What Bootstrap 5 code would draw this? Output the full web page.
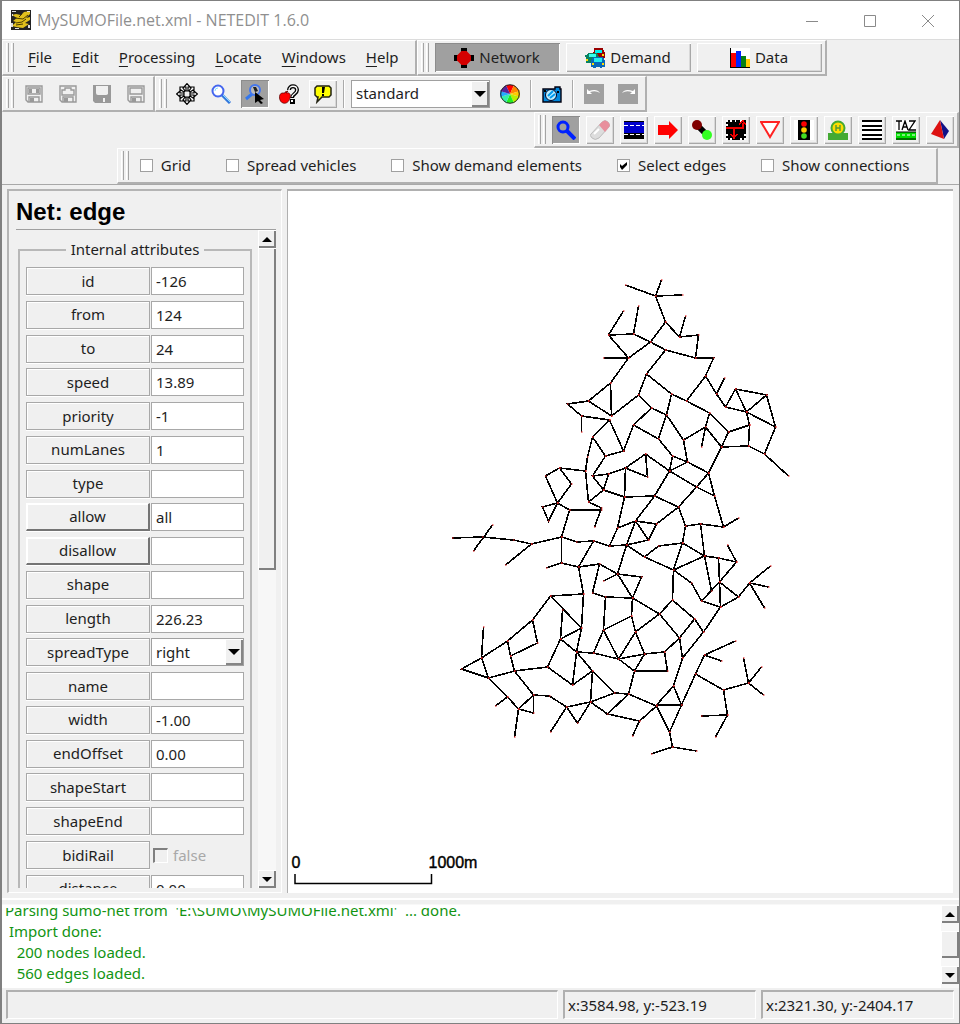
<!DOCTYPE html>
<html lang="en">
<head>
<meta charset="utf-8">
<meta name="viewport" content="width=device-width, initial-scale=1">
<title>MySUMOFile.net.xml - NETEDIT 1.6.0</title>
<link href="https://cdn.jsdelivr.net/npm/bootstrap@5.3.0/dist/css/bootstrap.min.css" rel="stylesheet">
<style>
:root { --face:#f0f0f0; --shade:#a0a0a0; --deep:#696969; }
body { font-family:"Noto Sans","Open Sans",sans-serif; font-size:15px; line-height:21px; color:#1e1e1e; background:var(--face); }
.app-window { border:1px solid #808080; border-left-width:2px; overflow:hidden; }
.titlebar { height:39px; background:#fff; color:#8f8f8f; font-family:"Open Sans",sans-serif; font-size:16px; border-bottom:1px solid #dcdcdc; padding-right:2px; }
.titlebar .win-btn { width:58px; height:38px; border:0; background:none; padding:0; color:#8a8a8a; }
.title-ico { margin:0 6px 0 9px; }
.tool-row { height:36px; }
.options-row { padding-left:12%; }
.tool-panel { height:36px; padding:0 3px; border:solid; border-width:1px 2px 2px 1px; border-color:#fff #b0b0b0 #b0b0b0 #fff; }
.tool-group { gap:6px; padding-left:2px; }
.grip { width:8px; height:29px; margin-right:4px; flex:none; background:linear-gradient(90deg,#fff 1px,var(--face) 1px,var(--face) 2px,#a4a4a4 2px,#a4a4a4 3px,var(--face) 3px,var(--face) 5px,#fff 5px,#fff 6px,var(--face) 6px,var(--face) 7px,#a4a4a4 7px); }
.menu-panel { padding-right:6px; }
.menu-link { padding:0 10px; color:#1e1e1e; text-decoration:none; }
.menu-link u { text-underline-offset:3px; }
.flat-btn, .raised-btn, .mode-btn { border:0; padding:0; background:var(--face); color:inherit; display:flex; align-items:center; justify-content:center; flex:none; }
.flat-btn, .raised-btn { width:28px; height:28px; }
.raised-btn, .mode-btn { box-shadow:inset 1px 1px #fff, inset -1px -1px #a8a8a8, inset -2px -2px #d8d8d8; }
.mode-btn { width:125px; height:29px; gap:5px; }
.is-on { background:#a0a0a0; box-shadow:inset 1px 1px #8c8c8c, inset -1px -1px #fff; }
.vsep { width:2px; height:28px; background:#aaa; border-right:1px solid #fff; }
.ico { width:20px; height:20px; flex:none; display:block; }
.combo { position:relative; background:#fff; border:1px solid var(--shade); }
.combo-view { width:139px; height:28px; }
.combo-attr { width:93px; }
.combo select { appearance:none; border:0; background:transparent; width:100%; height:100%; padding:0 4px; color:inherit; outline:0; }
.combo .drop { position:absolute; right:0; top:0; bottom:0; width:18px; pointer-events:none; background:var(--face); box-shadow:inset 1px 1px #fff, inset -2px -2px #858585; display:flex; align-items:center; justify-content:center; }
.option-list { gap:35px; padding-right:24px; padding-left:7px; }
.check-opt { gap:8px; }
.check-opt input { appearance:none; width:13px; height:13px; margin:0; background:#fff; border:1px solid #a0a0a0; }
.check-opt input:checked { background:#fff url("data:image/svg+xml,%3Csvg xmlns='http://www.w3.org/2000/svg' viewBox='0 0 11 11'%3E%3Cpath d='M2 4v3l2 3 5-5V2L4 6z'/%3E%3C/svg%3E"); }
.workspace { border-top:1px solid #a8a8a8; padding:4px 6px 5px 5px; gap:5px; }
.side { width:275px; border:solid; border-width:2px 1px 1px 2px; border-color:#b4b4b4 #fff #fff #b4b4b4; padding:0 5px 4px 7px; }
.side h1 { font:bold 24px/36px "Liberation Sans",Arial,sans-serif; color:#000; margin:0; border-bottom:1px solid #a0a0a0; height:39px; padding-top:3px; }
.attr-scroll { overflow:hidden; padding:9px 6px 0 2px; }
.attr-box { border:2px solid #b8b8b8; border-bottom:0; padding:0 6px; margin:0; min-height:0; }
.attr-box legend { float:none; width:auto; margin:0 auto; padding:0 5px; font-size:15px; line-height:21px; }
.attr-rows { margin:7px 0 -15px; }
.attr-row { height:28px; flex:none; gap:1px; }
.attr-name { width:124px; height:28px; border:1px solid #a8a8a8; box-shadow:inset 1px 1px #fff, 0 1px #fff; display:flex; align-items:center; justify-content:center; background:var(--face); color:inherit; padding:0; }
button.attr-name { border-color:#fff #747474 #747474 #fff; border-width:1px 2px 2px 1px; }
.attr-val { width:93px; height:28px; border:1px solid #a8a8a8; background:#fff; padding:0 4px; color:#1e1e1e; outline:0; border-radius:0; }
.attr-off { width:93px; gap:5px; color:#a8a8a8; padding-left:2px; }
.attr-off input { appearance:none; width:15px; height:15px; margin:0; border:solid; border-width:2px 1px 1px 2px; border-color:#808080 #fff #fff #808080; }
.sbar { width:18px; background:#f7f7f7; flex:none; }
.sbar button { height:18px; border:0; padding:0; background:var(--face); box-shadow:inset 1px 1px #fff, inset -2px -2px #808080; display:flex; align-items:center; justify-content:center; }
.sthumb { background:var(--face); box-shadow:inset 1px 1px #fff, inset -2px -2px #808080; }
.attr-thumb { height:49%; }
.log-thumb { height:27px; }
.map-view { border:solid; border-width:2px 0 0 1px; border-color:#b0b0b0; background:#fff; min-width:0; }
.map-view svg { width:100%; height:100%; display:block; }
.roads path { fill:none; stroke:#000; stroke-width:1.6; marker-start:url(#node); marker-end:url(#node); marker-mid:url(#node); shape-rendering:crispEdges; }
.log-area { height:84px; background:#fff; border-top:1px solid #f8f8f8; }
.split { height:6px; border-top:2px solid #fff; }
.log-text { color:#129412; overflow:hidden; white-space:pre; margin:0; border-top:3px solid #fff; padding:0 3px 4px; }
.status-row { height:35px; padding:2px 5px 4px 4px; gap:5px; }
.status-cell { border:solid; border-width:2px 1px 1px 2px; border-color:#b0b0b0 #fff #fff #b0b0b0; padding:0 3px; display:flex; align-items:center; }
.coord { width:193px; }
</style>
</head>
<body>
<div class="app-window vh-100 d-flex flex-column">
  <header class="titlebar d-flex align-items-center flex-shrink-0">
    <svg class="ico title-ico" viewBox="0 0 20 20"><rect width="20" height="20" fill="#222"/><path d="M1 5l4-1 5 1 3-3 6-1v3l-4 4 4-1v3l-5 3 4 1-6 4-7-1-4-1 4-4-3-1 4-3z" fill="#e0c01c"/><path d="M4 8l8 1 5-4M5 13l6-1 4-3M11 4l-3 3M5 15l7-1" stroke="#4a3b00" fill="none"/><path d="M1 1h4v1H1zM16 1h3v1h-3zM0 13h2v4H0zM17 15h2v3h-2zM4 18h4v1H4zM1 4h1v2H1z" fill="#ddd"/></svg>
    <span class="flex-fill">MySUMOFile.net.xml - NETEDIT 1.6.0</span>
    <button class="win-btn" aria-label="Minimize"><svg width="14" height="14"><path d="M1 7.5h12" stroke="currentColor"/></svg></button>
    <button class="win-btn" aria-label="Maximize"><svg width="14" height="14"><path d="M1.5 1.5h11v11h-11z" fill="none" stroke="currentColor"/></svg></button>
    <button class="win-btn" aria-label="Close"><svg width="14" height="14"><path d="M1 1l12 12M13 1L1 13" stroke="currentColor"/></svg></button>
  </header>

  <div class="tool-row d-flex flex-shrink-0">
    <nav class="tool-panel menu-panel d-flex align-items-center">
      <span class="grip"></span>
      <a class="menu-link" href="#"><u>F</u>ile</a><a class="menu-link" href="#"><u>E</u>dit</a><a class="menu-link" href="#"><u>P</u>rocessing</a><a class="menu-link" href="#"><u>L</u>ocate</a><a class="menu-link" href="#"><u>W</u>indows</a><a class="menu-link" href="#"><u>H</u>elp</a>
    </nav>
    <div class="tool-panel d-flex align-items-center">
      <span class="grip"></span>
      <div class="tool-group d-flex">
      <button class="mode-btn is-on"><svg class="ico" viewBox="0 0 20 20"><path d="M7 0h6v20H7zM0 7h20v6H0z"/><path d="M7.500 3h5l4.500 4.500v5L12.500 17h-5L3 12.500v-5z" fill="#d40000"/></svg>Network</button>
      <button class="mode-btn"><svg class="ico" viewBox="0 0 20 20" shape-rendering="crispEdges"><path d="M9 0h9l1 4h1v6h-3L8 8z" fill="#900"/><path d="M10 2h7v3h-7z" fill="#0ee"/><path d="M3 5h9l2 4v6H1V9H0V7h2z" fill="#088060"/><path d="M4 6h7v3H4z" fill="#3fe"/><path d="M8 9h10l2 4v6h-3v1h-2v-1h-4v1H8v-1H6v-6z" fill="#0868b8"/><path d="M9 10h8v4H9z" fill="#2ee"/><path d="M1 11h2v2H1zM7 15h2v2H7zM17 15h2v2h-2zM17 6h2v2h-2z" fill="#fd0"/></svg>Demand</button>
      <button class="mode-btn"><svg class="ico" viewBox="0 0 20 20" shape-rendering="crispEdges"><path fill="#fff" d="M0 0h20v20H0z"/><path d="M0 0h1v19h19v1H0z"/><path d="M1 5h5v14H1z" fill="#f00"/><path d="M6 3h5v16H6z" fill="#02f"/><path d="M11 8h5v11h-5z" fill="#068012"/><path d="M16 11h4v8h-4z" fill="#fc0"/></svg>Data</button>
      </div>
    </div>
  </div>

  <div class="tool-row d-flex flex-shrink-0">
    <div class="tool-panel d-flex align-items-center">
      <span class="grip"></span>
      <div class="tool-group d-flex">
      <button class="flat-btn" aria-label="Save network"><svg class="ico" viewBox="0 0 20 20" fill="none" stroke="#999" stroke-width="1.4"><path d="M2 2h16v16H4l-2-2z"/><path d="M4 4h12v6H4zM5 18v-5h10v5"/><path d="M5 5h3v4H5zM12 5h3v4h-3zM6 14h4v4H6z" fill="#999" stroke="none"/></svg></button>
      <button class="flat-btn" aria-label="Save additionals"><svg class="ico" viewBox="0 0 20 20" fill="none" stroke="#999" stroke-width="1.4"><path d="M2 2h16v16H4l-2-2z"/><path d="M4 11V6h3V4h6v2h3v5zM5 18v-5h10v5"/><path d="M6 14h4v4H6z" fill="#999" stroke="none"/></svg></button>
      <button class="flat-btn" aria-label="Save demand"><svg class="ico" viewBox="0 0 20 20"><path d="M1 1h18v18H3l-2-2z" fill="#999"/><path d="M4 2h12v8q-1 1-2 1H6q-2 0-2-2zM11 14h2v4h-2z" fill="#f0f0f0"/></svg></button>
      <button class="flat-btn" aria-label="Save data"><svg class="ico" viewBox="0 0 20 20" fill="none" stroke="#999" stroke-width="1.4"><path d="M2 2h16v16H4l-2-2z"/><path d="M4 4h12v6H4zM5 18v-5h10v5"/><path d="M6 14h4v4H6z" fill="#999" stroke="none"/></svg></button>
      </div>
    </div>
    <div class="tool-panel d-flex align-items-center">
      <span class="grip"></span>
      <div class="tool-group d-flex align-items-center">
      <button class="flat-btn" aria-label="Recenter view"><svg width="22" height="22" viewBox="0 0 22 22" fill="#fff" stroke="#000" stroke-width="1.2"><path d="M11 .6L14 4h-2v4h-2V4H8zM11 21.400L14 18h-2v-4h-2v4H8zM.6 11L4 8v2h4v2H4v2zM21.400 11L18 8v2h-4v2h4v2zM4 4h4L7 5l2 3-1 1-3-2-1 1zM18 4h-4l1 1-2 3 1 1 3-2 1 1zM4 18h4l-1-1 2-3-1-1-3 2-1-1zM18 18h-4l1-1-2-3 1-1 3 2 1-1z"/></svg></button>
      <button class="flat-btn" aria-label="Edit viewport"><svg class="ico" viewBox="0 0 20 20"><path d="M11 11l8 8" stroke="#37d" stroke-width="3"/><path d="M12 11l7 7" stroke="#8df" stroke-width="1"/><circle cx="7" cy="7" r="5.5" fill="#fff" stroke="#46e" stroke-width="2"/><path d="M4 7q0-3 3-3" fill="none" stroke="#8df"/></svg></button>
      <button class="flat-btn is-on" aria-label="Zoom style"><svg class="ico" viewBox="0 0 20 20"><path d="M7 10l-6 5" stroke="#37e" stroke-width="3"/><circle cx="10" cy="6" r="5" fill="#bbb" stroke="#47e" stroke-width="2"/><path d="M8 3h3l2 4-3 1z" fill="#222"/><path d="M10 8l9 7-4 1 3 3-2 1-3-3-3 2z" fill="#000"/></svg></button>
      <button class="flat-btn" aria-label="Toggle tooltips"><svg class="ico" viewBox="0 0 20 20"><path d="M10 6c0-5 8-5 8 0 0 4-5 4-5 8" fill="none" stroke="#000" stroke-width="4"/><path d="M10 6c0-5 8-5 8 0 0 4-5 4-5 7" fill="none" stroke="#fff" stroke-width="1.3"/><path d="M11 15h5v5h-5z"/><path d="M12 16h2v2h-2z" fill="#fff"/><path d="M6 8l3-1-2 2c4-1 5 2 4 5-1 4-4 6-7 5-4-1-5-9-1-10h3z" fill="#f00" stroke="#500" stroke-width=".7"/></svg></button>
      <button class="raised-btn" aria-label="Messages"><svg class="ico" viewBox="0 0 20 20"><path d="M4 2h12l2 2v7l-2 2h-7l-5 5 1-5H4l-2-2V4z" fill="#ff0" stroke="#221" stroke-width="1.500"/><path d="M9 3h3l-1 6H9zM9 10h2v2H9z"/></svg></button>
      <span class="vsep"></span>
      <div class="combo combo-view"><select aria-label="Visualization scheme"><option>standard</option></select><span class="drop"><svg width="12" height="6"><path d="M0 0h12l-6 6z"/></svg></span></div>
      <button class="flat-btn" aria-label="Color scheme"><svg class="ico" viewBox="0 0 20 20"><path d="M10 10L6 1h8z" fill="#f00"/><path d="M10 10l4-9 6 6z" fill="#f80"/><path d="M10 10l10-3v6z" fill="#fc0"/><path d="M10 10l10 3-6 6z" fill="#be0"/><path d="M10 10l4 9H6z" fill="#2e2"/><path d="M10 10l-4 9-6-6z" fill="#3ea"/><path d="M10 10L0 13V7z" fill="#2af"/><path d="M10 10L0 7l6-6z" fill="#529"/><circle cx="10" cy="10" r="9.300" fill="none" stroke="#222"/></svg></button>
      <span class="vsep"></span>
      <button class="flat-btn" aria-label="Snapshot"><svg class="ico" viewBox="0 0 20 20"><path d="M1 5h12V3h5v2h1v13H1z" fill="#08d" stroke="#001" stroke-width="1.400"/><circle cx="9" cy="11" r="5.500" fill="#bef" stroke="#002"/><path d="M6 12l5-5M8 14l5-4" stroke="#09e" stroke-width="2"/><path d="M2 6h2v2H2zM15 7h2v2h-2z"/></svg></button>
      <span class="vsep"></span>
      <button class="flat-btn" aria-label="Undo"><svg class="ico" viewBox="0 0 20 20"><path fill="#a0a0a0" d="M0 0h20v20H0z"/><path d="M3 5v5h5L6 8q6-2 10 1-3-5-11-2z" fill="#fff"/></svg></button>
      <button class="flat-btn" aria-label="Redo"><svg class="ico" viewBox="0 0 20 20"><path fill="#a0a0a0" d="M0 0h20v20H0z"/><path d="M17 5v5h-5l2-2Q8 6 4 9q3-5 11-2z" fill="#fff"/></svg></button>
      </div>
    </div>
  </div>

  <div class="tool-row d-flex flex-shrink-0 justify-content-end">
    <div class="tool-panel d-flex align-items-center">
      <span class="grip"></span>
      <div class="tool-group d-flex">
      <button class="raised-btn is-on" aria-label="Inspect"><svg class="ico" viewBox="0 0 20 20"><path d="M10 10l9 9" stroke="#02f" stroke-width="4"/><circle cx="7" cy="7" r="5" fill="none" stroke="#02f" stroke-width="3"/></svg></button>
      <button class="raised-btn" aria-label="Delete"><svg class="ico" viewBox="0 0 20 20"><path d="M1 14L12 2q3-3 6 0t1 5L9 18q-4 3-7 0t-1-4z" fill="#ddd" stroke="#aaa" stroke-width=".7"/><path d="M9 5l3-3q3-3 6 0t1 5l-4 5z" fill="#e88f9c"/><path d="M4 14l5-5" stroke="#fff" stroke-width="2"/></svg></button>
      <button class="raised-btn" aria-label="Select"><svg class="ico" viewBox="0 0 20 20" shape-rendering="crispEdges"><path d="M0 1h20v18H0z"/><path d="M0 2h20v11H0z" fill="#00c"/><path d="M0 5h20M0 14h20" stroke="#fff" stroke-dasharray="4 2"/></svg></button>
      <button class="raised-btn" aria-label="Move"><svg class="ico" viewBox="0 0 20 20"><path d="M0 5h11V1l9 9-9 9v-4H0z" fill="#f00"/></svg></button>
      <button class="raised-btn" aria-label="Create edge"><svg class="ico" viewBox="0 0 20 20"><path d="M6 6l9 9" stroke="#000" stroke-width="6"/><circle cx="5" cy="5" r="5" fill="#800000"/><circle cx="15" cy="15" r="5" fill="#3f2"/></svg></button>
      <button class="raised-btn" aria-label="Connection"><svg class="ico" viewBox="0 0 20 20" shape-rendering="crispEdges"><path d="M0 0h20v20H0z"/><path d="M0 0h2v2H0zM4 0h2v2H4zM14 0h2v2h-2zM0 4h2v2H0zM0 14h2v2H0zM4 18h2v2H4zM14 18h2v2h-2zM18 18h2v2h-2zM0 18h2v2H0zM18 14h2v2h-2zM9 0h1v2H9z" fill="#fff"/><path d="M0 8h17V3M13 4l4-3 3 4M8 8v10M5 14l3 4 3-4" fill="none" stroke="#e00" stroke-width="1.5"/></svg></button>
      <button class="raised-btn" aria-label="Prohibition"><svg class="ico" viewBox="0 0 20 20"><path d="M1 2h18l-9 15z" fill="#fff" stroke="#f22" stroke-width="2"/></svg></button>
      <button class="raised-btn" aria-label="Traffic light"><svg class="ico" viewBox="0 0 20 20"><path fill="#fff" d="M0 0h20v20H0z"/><path d="M4 0h12v20H4z"/><circle cx="10" cy="4" r="2.800" fill="#f00"/><circle cx="10" cy="10" r="2.800" fill="#fc0"/><circle cx="10" cy="16" r="2.800" fill="#4d2"/></svg></button>
      <button class="raised-btn" aria-label="Additional"><svg class="ico" viewBox="0 0 20 20"><path d="M0 13h20v7H0z" fill="#4a3"/><circle cx="10" cy="8" r="6.500" fill="#fd0" stroke="#4a3" stroke-width="2"/><path d="M8 5v6M12 5v6M8 8h4" stroke="#593" stroke-width="1.400"/></svg></button>
      <button class="raised-btn" aria-label="Crossing"><svg class="ico" viewBox="0 0 20 20" shape-rendering="crispEdges"><path fill="#fff" d="M0 0h20v20H0z"/><path d="M0 1h20M0 6h20M0 10h20M0 15h20M0 19h20" stroke="#000" stroke-width="2"/></svg></button>
      <button class="raised-btn" aria-label="TAZ"><svg class="ico" viewBox="0 0 20 20"><path fill="#fff" d="M0 0h20v20H0z"/><path d="M0 1h6M3 1v9M6 10l3-9 3 9M7 7h4M13 1h6l-6 9h7" fill="none" stroke="#000" stroke-width="1.300"/><path d="M0 12h20v8H0z" fill="#0d0"/><path d="M0 12h20M0 19h20" stroke="#000"/><path d="M1 15h20" stroke="#fff" stroke-dasharray="3 2"/></svg></button>
      <button class="raised-btn" aria-label="Shape"><svg class="ico" viewBox="0 0 20 20"><path d="M10 0l9 11-5 8z" fill="#118"/><path d="M10 0L1 14l13 5z" fill="#d11"/></svg></button>
      </div>
    </div>
  </div>

  <div class="tool-row options-row d-flex flex-shrink-0">
    <div class="tool-panel d-flex align-items-center">
      <span class="grip"></span>
      <div class="option-list d-flex">
        <label class="check-opt d-flex align-items-center"><input type="checkbox">Grid</label>
        <label class="check-opt d-flex align-items-center"><input type="checkbox">Spread vehicles</label>
        <label class="check-opt d-flex align-items-center"><input type="checkbox">Show demand elements</label>
        <label class="check-opt d-flex align-items-center"><input type="checkbox" checked>Select edges</label>
        <label class="check-opt d-flex align-items-center"><input type="checkbox">Show connections</label>
      </div>
    </div>
  </div>

  <main class="workspace d-flex flex-fill overflow-hidden">
    <section class="side d-flex flex-column flex-shrink-0">
      <h1>Net: edge</h1>
      <div class="d-flex flex-fill overflow-hidden">
        <div class="attr-scroll d-flex flex-column flex-fill">
          <fieldset class="attr-box d-flex flex-column flex-fill">
            <legend>Internal attributes</legend>
            <div class="attr-rows d-flex flex-column justify-content-between flex-fill">
              <div class="attr-row d-flex"><label class="attr-name" for="a1">id</label><input class="attr-val" id="a1" value="-126"></div>
              <div class="attr-row d-flex"><label class="attr-name" for="a2">from</label><input class="attr-val" id="a2" value="124"></div>
              <div class="attr-row d-flex"><label class="attr-name" for="a3">to</label><input class="attr-val" id="a3" value="24"></div>
              <div class="attr-row d-flex"><label class="attr-name" for="a4">speed</label><input class="attr-val" id="a4" value="13.89"></div>
              <div class="attr-row d-flex"><label class="attr-name" for="a5">priority</label><input class="attr-val" id="a5" value="-1"></div>
              <div class="attr-row d-flex"><label class="attr-name" for="a6">numLanes</label><input class="attr-val" id="a6" value="1"></div>
              <div class="attr-row d-flex"><label class="attr-name" for="a7">type</label><input class="attr-val" id="a7"></div>
              <div class="attr-row d-flex"><button class="attr-name">allow</button><input class="attr-val" aria-label="allow" value="all"></div>
              <div class="attr-row d-flex"><button class="attr-name">disallow</button><input class="attr-val" aria-label="disallow"></div>
              <div class="attr-row d-flex"><label class="attr-name" for="a10">shape</label><input class="attr-val" id="a10"></div>
              <div class="attr-row d-flex"><label class="attr-name" for="a11">length</label><input class="attr-val" id="a11" value="226.23"></div>
              <div class="attr-row d-flex"><label class="attr-name" for="a12">spreadType</label><div class="combo combo-attr"><select id="a12"><option>right</option></select><span class="drop"><svg width="12" height="6"><path d="M0 0h12l-6 6z"/></svg></span></div></div>
              <div class="attr-row d-flex"><label class="attr-name" for="a13">name</label><input class="attr-val" id="a13"></div>
              <div class="attr-row d-flex"><label class="attr-name" for="a14">width</label><input class="attr-val" id="a14" value="-1.00"></div>
              <div class="attr-row d-flex"><label class="attr-name" for="a15">endOffset</label><input class="attr-val" id="a15" value="0.00"></div>
              <div class="attr-row d-flex"><label class="attr-name" for="a16">shapeStart</label><input class="attr-val" id="a16"></div>
              <div class="attr-row d-flex"><label class="attr-name" for="a17">shapeEnd</label><input class="attr-val" id="a17"></div>
              <div class="attr-row d-flex"><label class="attr-name" for="a18">bidiRail</label><label class="attr-off d-flex align-items-center"><input type="checkbox" id="a18" disabled>false</label></div>
              <div class="attr-row d-flex"><label class="attr-name" for="a19">distance</label><input class="attr-val" id="a19" value="0.00"></div>
            </div>
          </fieldset>
        </div>
        <div class="sbar d-flex flex-column">
          <button aria-label="Scroll up"><svg width="10" height="5"><path d="M0 5h10L5 0z"/></svg></button>
          <div class="sthumb attr-thumb"></div>
          <button class="mt-auto" aria-label="Scroll down"><svg width="10" height="5"><path d="M0 0h10L5 5z"/></svg></button>
        </div>
      </div>
    </section>

    <section class="map-view flex-fill">
      <svg viewBox="289 191 664 702" role="img" aria-label="Road network">
        <defs><marker id="node" markerUnits="userSpaceOnUse" markerWidth="2" markerHeight="2" refX="1" refY="1"><path d="M0 0h2v2H0z" fill="#d22" fill-opacity=".6" stroke="none"/></marker></defs>
        <g class="roads">
          <path d="M626 285L656 296L683 295M662 280L656 296L666 322L680 337L686 316M680 337L699 335L696 358M666 322L651 342L629 358L609 335L624 311M609 335L634 334L639 306M634 334L651 342L666 350L696 358L714 358L706 376L687 401M706 376L717 394L725 378M717 394L726 407L747 412M726 407L736 389L767 395L747 412L736 389M747 412L776 427L767 395M747 412L750 425M604 358H629L611 383L612 416L589 401L611 383M589 401L568 404L582 416V432M582 416L610 420M612 416L639 395L647 374L666 350M647 374L672 394L687 401L710 413L729 432L750 425M639 395L652 408L667 415L672 394M652 408L634 425L659 439L667 415L684 440L706 427L710 413"/>
          <path d="M610 420L593 437L606 456L624 451L610 420M624 451L634 425M659 439L673 456L688 462L684 440M673 456L670 471L688 462L709 473L722 447L706 427L702 447M722 447L729 432M722 447L749 446L750 425M749 446L765 454L789 476M765 454L776 427M709 473L697 487L679 507L657 524L649 540L627 545M646 454L670 471L697 487L715 496L709 473M715 496L724 527L739 518M724 527L701 524L686 526L679 507L655 496L670 471M701 524L705 556L683 543L686 526M683 543L674 570L645 557L659 546L683 543M645 557L627 545L636 521L649 540M636 521L657 524M636 521L618 528L625 497L655 496L636 521M625 497L626 468L646 454L648 477L626 468L609 474L593 476L604 490L609 474M604 490L625 497M593 476L606 456M604 490L589 502L602 508L595 527M593 437L588 457L586 471L589 502M586 471L560 468L546 476L558 503L572 484L560 468M558 503L543 507L549 521L558 503L570 510H602M570 510L562 537L577 542L594 541L610 546L627 545M618 528L610 546M562 537V563L547 568M562 563L579 567L594 541M579 567L600 564"/>
          <path d="M453 538L483 537L514 540L532 544L562 537M493 525L474 551M532 544L506 565M579 567L584 594L551 596L533 620L508 641L482 658L462 669L489 678L515 671L548 667L561 639L577 652L573 685L548 667M584 594L582 628L577 652L594 653L604 630L606 597L593 593L600 564L618 574L604 581M551 596L582 628L561 639L563 610M533 620L538 643L511 656L508 641M511 656L515 671L534 695L519 709L508 697L489 678L482 658L484 627M508 697L496 706M519 709L515 737M519 709L534 713V695L550 696L567 707L578 723L591 702L567 707L551 732M591 702L593 671L573 685M577 652L593 671L615 693L591 702L608 714M594 653L619 659L604 630"/>
          <path d="M627 545L618 574L642 577L633 598L618 574M606 597L633 598L632 616L636 632L660 614L633 598M632 616L604 630M636 632L619 659L645 654L636 632M619 659L635 671L645 654L665 652L668 671H635L629 694L615 693M665 652L680 638L660 614L673 600L674 570L692 583L702 601L721 607L739 597L750 583L771 566M750 583L769 587M750 583L765 608M721 607L720 582L739 597M719 558L720 582L737 562L728 545M705 556L719 558L737 562M705 556L712 591M702 601L720 582M705 556L674 570M673 600L695 619L704 632L721 607M695 619L680 638L683 658L704 632M683 658L674 686L682 705H657L674 686M657 706L629 694L608 714L640 721L657 706L670 732L682 705L696 674L705 655L736 641M705 655L722 661M696 674L724 690L749 683L744 658M749 683L762 667M749 683L764 695M724 690L728 715L702 716M728 715L716 737M640 721L633 736M670 732L673 747L652 754M673 747L697 751"/>
        </g>
        <path d="M295.500 874v9.500h136.500V874" fill="none" stroke="#000" stroke-width="1.500"/>
        <g font-family="Liberation Sans, Arial, sans-serif" font-size="16" stroke="#000" stroke-width=".4"><text x="292" y="868">0</text><text x="429" y="868">1000m</text></g>
      </svg>
    </section>
  </main>

  <div class="split flex-shrink-0"></div>
  <div class="log-area d-flex flex-shrink-0">
    <div class="log-text flex-fill d-flex flex-column justify-content-end"><div>Parsing sumo-net from  'E:\SUMO\MySUMOFile.net.xml'  ... done.</div><div> Import done:</div><div>   200 nodes loaded.</div><div>   560 edges loaded.</div></div>
    <div class="sbar d-flex flex-column pb-1">
      <button aria-label="Scroll log up"><svg width="10" height="5"><path d="M0 5h10L5 0z"/></svg></button>
      <div class="sthumb log-thumb mt-auto mb-2"></div>
      <button aria-label="Scroll log down"><svg width="10" height="5"><path d="M0 0h10L5 5z"/></svg></button>
    </div>
  </div>
  <footer class="status-row d-flex flex-shrink-0">
    <div class="status-cell flex-fill"></div>
    <div class="status-cell coord">x:3584.98, y:-523.19</div>
    <div class="status-cell coord">x:2321.30, y:-2404.17</div>
  </footer>
</div>
<script src="https://cdn.jsdelivr.net/npm/bootstrap@5.3.0/dist/js/bootstrap.bundle.min.js"></script>
</body>
</html>
